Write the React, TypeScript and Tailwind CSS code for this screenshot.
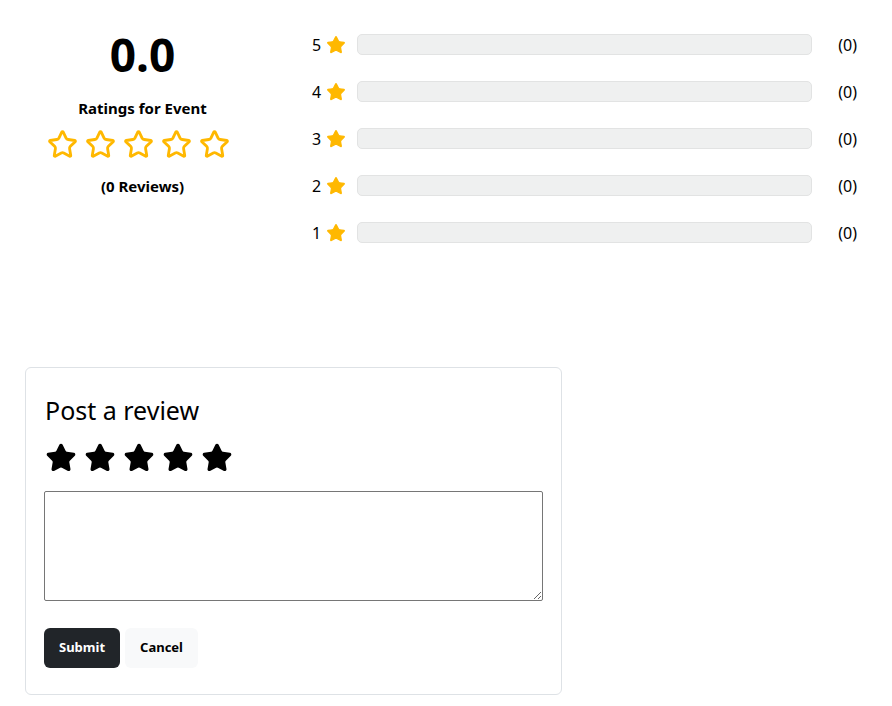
import React from "react";
import { Star } from "lucide-react";

const rows = [5, 4, 3, 2, 1];

export default function App() {
  return (
    <div className="bg-white text-black min-h-[706px]" style={{ fontFamily: '"Noto Sans", "Open Sans", sans-serif' }}>
      <div className="flex pt-[26px]">
        <div className="w-[285px] flex flex-col items-center">
          <div className="text-[46px] font-bold leading-[56px]">0.0</div>
          <div className="text-[15px] font-bold mt-[16px] leading-[20px]">Ratings for Event</div>
          <div className="flex gap-[7px] mt-[11px] mr-[8px]">
            {rows.map((i) => (
              <Star key={i} size={31} strokeWidth={2.2} className="text-[#ffb800]" />
            ))}
          </div>
          <div className="text-[15px] font-bold mt-[16px] leading-[20px]">(0 Reviews)</div>
        </div>
        <div className="flex-1 pl-[27px] pr-[35px] pt-[8px] flex flex-col gap-[26px]">
          {rows.map((r) => (
            <div key={r} className="flex items-center h-[21px]">
              <span className="text-[16px] w-[15px]">{r}</span>
              <Star size={20} className="text-[#ffb800] ml-[-1px]" fill="#ffb800" strokeWidth={1.5} />
              <div className="ml-[11px] w-[455px] h-[21px] rounded-[5px] bg-[#eff0f0] border border-[#e2e3e3]" />
              <span className="ml-auto text-[16px]">(0)</span>
            </div>
          ))}
        </div>
      </div>
      <div className="ml-[25px] mt-[124px] w-[537px] border border-[#dee2e6] rounded-[6px] px-[18px] pt-[25px] pb-[26px]">
        <div className="text-[25px] leading-[34px] ml-[1px]">Post a review</div>
        <div className="flex gap-[7px] mt-[15px] ml-[1px]">
          {rows.map((i) => (
            <Star key={i} size={32} fill="black" strokeWidth={1.5} className="text-black" />
          ))}
        </div>
        <textarea className="block mt-[17px] w-[499px] h-[110px] border border-[#767676] rounded-[2px] resize" />
        <div className="flex gap-[5px] mt-[27px]">
          <button className="bg-[#212529] text-white text-[13px] font-bold px-[15px] h-[40px] rounded-[6px]">Submit</button>
          <button className="bg-[#f8f9fa] text-black text-[13px] font-bold px-[15px] h-[40px] rounded-[6px]">Cancel</button>
        </div>
      </div>
    </div>
  );
}
